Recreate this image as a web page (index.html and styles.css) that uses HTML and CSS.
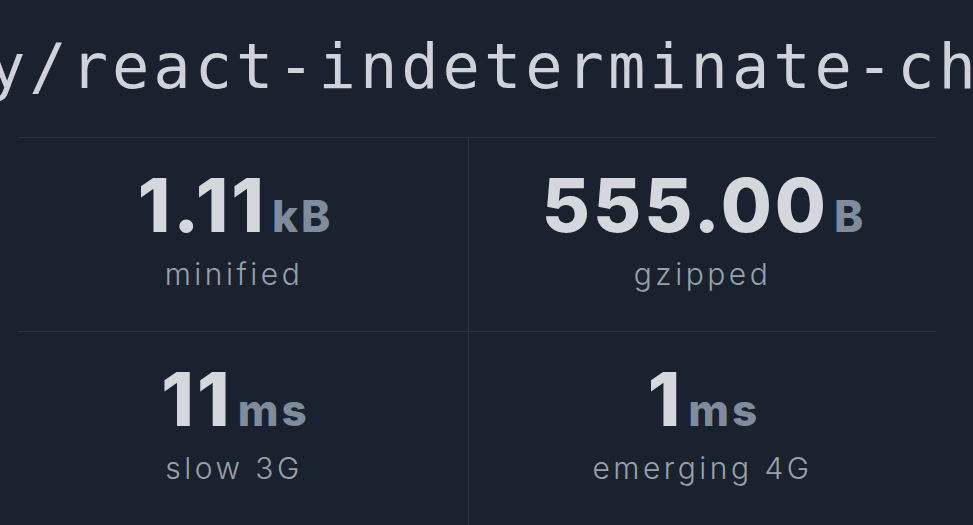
FILE: index.html
```html
<!DOCTYPE HTML>
<html>
<head>
    <meta charset="utf-8">
    <meta name="viewport" content="width=device-width, initial-scale=1">
    <link rel="stylesheet" href="styles.css">
</head>
<body>
    <div class="page">
        <div class="package-header">
            <h1 class="package-name">y/react-indeterminate-checkbox</h1>
        </div>

        <div class="stats">
            <div class="stat">
                <div class="stat-value"><span class="stat-number">1.11</span><span class="stat-unit">kB</span></div>
                <div class="stat-label">minified</div>
            </div>
            <div class="stat">
                <div class="stat-value"><span class="stat-number">555.00</span><span class="stat-unit">B</span></div>
                <div class="stat-label">gzipped</div>
            </div>
            <div class="stat">
                <div class="stat-value"><span class="stat-number">11</span><span class="stat-unit">ms</span></div>
                <div class="stat-label">slow 3G</div>
            </div>
            <div class="stat">
                <div class="stat-value"><span class="stat-number">1</span><span class="stat-unit">ms</span></div>
                <div class="stat-label">emerging 4G</div>
            </div>
        </div>
    </div>
</body>
</html>
```

FILE: styles.css
```css
body {
    margin: 0;
    padding: 0;
    background-color: #19222e;
    font-family: Inter, "Noto Sans", sans-serif;
    color: #d4d7dc;
}

.page {
    width: 973px;
    height: 525px;
    overflow: hidden;
}

.package-header {
    height: 137px;
    overflow: hidden;
}

.package-name {
    margin: 0 0 0 -12px;
    padding-top: 30px;
    font-family: "DejaVu Sans Mono", monospace;
    font-size: 62px;
    font-weight: normal;
    letter-spacing: 4px;
    line-height: 74px;
    white-space: nowrap;
    color: #cfd3d9;
}

.stats {
    display: grid;
    grid-template-columns: 451px 467px;
    width: 918px;
    margin-left: 18px;
}

.stat {
    box-sizing: border-box;
    height: 194px;
    border-top: 1px solid #2b3543;
    text-align: center;
    padding-top: 33px;
}

.stat:nth-child(odd) {
    border-right: 1px solid #2b3543;
    padding-right: 18px;
}

.stat-value {
    font-size: 74px;
    line-height: 68px;
    white-space: nowrap;
}

.stat-number {
    font-weight: 800;
    letter-spacing: 3px;
    color: #d4d7dc;
}

.stat-unit {
    margin: 0 -3px 0 5px;
    font-size: 44px;
    line-height: 1;
    font-weight: 800;
    letter-spacing: 3px;
    color: #808c9b;
}

.stat-label {
    margin-top: 17px;
    font-size: 30px;
    line-height: 36px;
    font-weight: 300;
    letter-spacing: 3.5px;
    color: #99a0aa;
}
```
